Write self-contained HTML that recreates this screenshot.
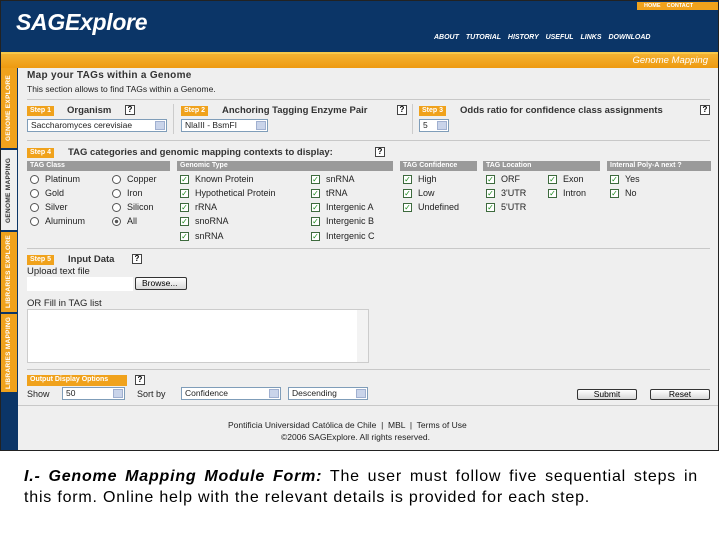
<!DOCTYPE html><html><head><style>
*{margin:0;padding:0;box-sizing:border-box}
body{width:720px;height:540px;background:#fff;font-family:"Liberation Sans",sans-serif;position:relative;overflow:hidden}
.a{position:absolute}
#frame{left:0;top:0;width:719px;height:451px;background:#0b3567;border:1px solid #222}
.t{font-size:9px;color:#222;white-space:nowrap}
.b{font-weight:bold;color:#333;font-size:9.5px;white-space:nowrap}
.step{background:#f0a21c;color:#fff;font-size:7px;font-weight:bold;height:10px;line-height:10px;padding:0 3px}
.hlp{width:10px;height:10px;border:1px solid #444;background:#fff;font-size:8px;font-weight:bold;text-align:center;line-height:8px}
.sel{background:#fff;border:1px solid #7f9db9;height:13px;font-size:8.5px;line-height:11px;padding-left:3px;color:#222}
.sel i{position:absolute;right:1px;top:1px;width:10px;height:9px;background:#c9d4ea;border:1px solid #a0b0d0}
.hdr{background:#9a9a9a;color:#fff;font-size:7px;font-weight:bold;height:10px;line-height:10px;padding-left:3px}
.cb{width:9px;height:9px;border:1px solid #3d6a3d;background:#fff;color:#1a8a1a;font-size:8px;line-height:7px;text-align:center}
.rd{width:9px;height:9px;border:1px solid #555;border-radius:50%;background:#fff}
.hr{height:1px;background:#c8c8c8}
.btn{background:linear-gradient(#fff,#d8d8d8);border:1px solid #333;border-radius:2px;font-size:8.5px;text-align:center;height:11px;line-height:9px}
.tab{left:1px;width:16px;background:#f0a21c;color:#fff;font-size:6.5px;font-weight:bold;writing-mode:vertical-rl;transform:rotate(180deg);text-align:center;letter-spacing:.3px}
</style></head><body>
<div id="frame" class="a"></div>
<div class="a" style="left:16px;top:9px;color:#fff;font-size:23px;font-weight:bold;font-style:italic;letter-spacing:-.3px">SAGExplore</div>
<div class="a" style="left:637px;top:2px;width:81px;height:8px;background:#f0a21c;color:#fff;font-size:5.5px;font-weight:bold;line-height:8px;padding-left:7px">HOME&nbsp;&nbsp;&nbsp;&nbsp;CONTACT</div>
<div class="a" style="left:434px;top:34px;color:#fff;font-size:7px;font-weight:bold;font-style:italic;word-spacing:5px">ABOUT TUTORIAL HISTORY USEFUL&nbsp;LINKS DOWNLOAD</div>
<div class="a" style="left:1px;top:52px;width:717px;height:2px;background:#f7c84a"></div>
<div class="a" style="left:1px;top:54px;width:717px;height:14px;background:linear-gradient(#f4b232,#ee9a10);color:#fff;font-size:9.5px;font-style:italic;text-align:right;padding-right:10px;line-height:14px">Genome Mapping</div>
<div class="a" style="left:18px;top:68px;width:700px;height:382px;background:#efefef"></div>
<div class="a tab" style="top:68px;height:80px;line-height:16px">GENOME EXPLORE</div>
<div class="a tab" style="top:150px;height:80px;line-height:16px;background:#efefef;color:#333">GENOME MAPPING</div>
<div class="a tab" style="top:232px;height:80px;line-height:16px">LIBRARIES EXPLORE</div>
<div class="a tab" style="top:314px;height:78px;line-height:16px">LIBRARIES MAPPING</div>

<div class="a b" style="left:27px;top:70px;font-size:10px;letter-spacing:.3px">Map your TAGs within a Genome</div>
<div class="a t" style="left:27px;top:84px;font-size:8.5px">This section allows to find TAGs within a Genome.</div>
<div class="a hr" style="left:27px;top:99px;width:683px"></div>

<div class="a step" style="left:27px;top:106px">Step 1</div><div class="a b" style="left:67px;top:105px">Organism</div><div class="a hlp" style="left:125px;top:105px">?</div>
<div class="a sel" style="left:27px;top:119px;width:140px">Saccharomyces cerevisiae<i></i></div>
<div class="a" style="left:173px;top:104px;width:1px;height:30px;background:#ccc"></div>
<div class="a step" style="left:181px;top:106px">Step 2</div><div class="a b" style="left:222px;top:105px">Anchoring Tagging Enzyme Pair</div><div class="a hlp" style="left:397px;top:105px">?</div>
<div class="a sel" style="left:181px;top:119px;width:87px">NlaIII - BsmFI<i></i></div>
<div class="a" style="left:412px;top:104px;width:1px;height:30px;background:#ccc"></div>
<div class="a step" style="left:419px;top:106px">Step 3</div><div class="a b" style="left:460px;top:105px">Odds ratio for confidence class assignments</div><div class="a hlp" style="left:700px;top:105px">?</div>
<div class="a sel" style="left:419px;top:119px;width:30px">5<i></i></div>
<div class="a hr" style="left:27px;top:140px;width:683px"></div>

<div class="a step" style="left:27px;top:148px">Step 4</div><div class="a b" style="left:68px;top:147px">TAG categories and genomic mapping contexts to display:</div><div class="a hlp" style="left:375px;top:147px">?</div>
<div class="a hdr" style="left:27px;top:161px;width:143px">TAG Class</div>
<div class="a hdr" style="left:177px;top:161px;width:216px">Genomic Type</div>
<div class="a hdr" style="left:400px;top:161px;width:77px">TAG Confidence</div>
<div class="a hdr" style="left:483px;top:161px;width:117px">TAG Location</div>
<div class="a hdr" style="left:607px;top:161px;width:104px">Internal Poly-A next ?</div>

<div class="a rd" style="left:30px;top:175px"></div><div class="a t" style="left:45px;top:174px">Platinum</div>
<div class="a rd" style="left:30px;top:189px"></div><div class="a t" style="left:45px;top:188px">Gold</div>
<div class="a rd" style="left:30px;top:203px"></div><div class="a t" style="left:45px;top:202px">Silver</div>
<div class="a rd" style="left:30px;top:217px"></div><div class="a t" style="left:45px;top:216px">Aluminum</div>
<div class="a rd" style="left:112px;top:175px"></div><div class="a t" style="left:127px;top:174px">Copper</div>
<div class="a rd" style="left:112px;top:189px"></div><div class="a t" style="left:127px;top:188px">Iron</div>
<div class="a rd" style="left:112px;top:203px"></div><div class="a t" style="left:127px;top:202px">Silicon</div>
<div class="a rd" style="left:112px;top:217px;background:radial-gradient(#555 30%,#fff 40%)"></div><div class="a t" style="left:127px;top:216px">All</div>

<div class="a cb" style="left:180px;top:175px">✓</div><div class="a t" style="left:195px;top:174px">Known Protein</div>
<div class="a cb" style="left:180px;top:189px">✓</div><div class="a t" style="left:195px;top:188px">Hypothetical Protein</div>
<div class="a cb" style="left:180px;top:203px">✓</div><div class="a t" style="left:195px;top:202px">rRNA</div>
<div class="a cb" style="left:180px;top:217px">✓</div><div class="a t" style="left:195px;top:216px">snoRNA</div>
<div class="a cb" style="left:180px;top:232px">✓</div><div class="a t" style="left:195px;top:231px">snRNA</div>
<div class="a cb" style="left:311px;top:175px">✓</div><div class="a t" style="left:326px;top:174px">snRNA</div>
<div class="a cb" style="left:311px;top:189px">✓</div><div class="a t" style="left:326px;top:188px">tRNA</div>
<div class="a cb" style="left:311px;top:203px">✓</div><div class="a t" style="left:326px;top:202px">Intergenic A</div>
<div class="a cb" style="left:311px;top:217px">✓</div><div class="a t" style="left:326px;top:216px">Intergenic B</div>
<div class="a cb" style="left:311px;top:232px">✓</div><div class="a t" style="left:326px;top:231px">Intergenic C</div>
<div class="a cb" style="left:403px;top:175px">✓</div><div class="a t" style="left:418px;top:174px">High</div>
<div class="a cb" style="left:403px;top:189px">✓</div><div class="a t" style="left:418px;top:188px">Low</div>
<div class="a cb" style="left:403px;top:203px">✓</div><div class="a t" style="left:418px;top:202px">Undefined</div>
<div class="a cb" style="left:486px;top:175px">✓</div><div class="a t" style="left:501px;top:174px">ORF</div>
<div class="a cb" style="left:486px;top:189px">✓</div><div class="a t" style="left:501px;top:188px">3'UTR</div>
<div class="a cb" style="left:486px;top:203px">✓</div><div class="a t" style="left:501px;top:202px">5'UTR</div>
<div class="a cb" style="left:548px;top:175px">✓</div><div class="a t" style="left:563px;top:174px">Exon</div>
<div class="a cb" style="left:548px;top:189px">✓</div><div class="a t" style="left:563px;top:188px">Intron</div>
<div class="a cb" style="left:610px;top:175px">✓</div><div class="a t" style="left:625px;top:174px">Yes</div>
<div class="a cb" style="left:610px;top:189px">✓</div><div class="a t" style="left:625px;top:188px">No</div>
<div class="a hr" style="left:27px;top:248px;width:683px"></div>

<div class="a step" style="left:27px;top:255px">Step 5</div><div class="a b" style="left:68px;top:254px">Input Data</div><div class="a hlp" style="left:132px;top:254px">?</div>
<div class="a b" style="left:27px;top:266px;font-weight:normal;color:#222">Upload text file</div>
<div class="a" style="left:27px;top:277px;width:106px;height:14px;background:#fff"></div>
<div class="a btn" style="left:135px;top:277px;width:52px;height:13px;text-align:left;padding-left:6px;line-height:11px">Browse...</div>
<div class="a b" style="left:27px;top:298px;font-weight:normal;color:#222">OR Fill in TAG list</div>
<div class="a" style="left:27px;top:309px;width:342px;height:54px;background:#fff;border:1px solid #ccc"></div>
<div class="a" style="left:357px;top:310px;width:11px;height:52px;background:#f3f3f3"></div>
<div class="a hr" style="left:27px;top:369px;width:683px"></div>

<div class="a step" style="left:27px;top:375px;height:11px;width:100px">Output Display Options</div><div class="a hlp" style="left:135px;top:375px">?</div>
<div class="a t" style="left:27px;top:389px">Show</div>
<div class="a sel" style="left:62px;top:387px;width:63px">50<i></i></div>
<div class="a t" style="left:137px;top:389px">Sort by</div>
<div class="a sel" style="left:181px;top:387px;width:100px">Confidence<i></i></div>
<div class="a sel" style="left:288px;top:387px;width:80px">Descending<i></i></div>
<div class="a btn" style="left:577px;top:389px;width:60px">Submit</div>
<div class="a btn" style="left:650px;top:389px;width:60px">Reset</div>
<div class="a hr" style="left:18px;top:405px;width:700px"></div>
<div class="a t" style="left:228px;top:420px;font-size:8.5px">Pontificia Universidad Católica de Chile &nbsp;|&nbsp; MBL &nbsp;|&nbsp; Terms of Use</div>
<div class="a t" style="left:281px;top:432px;font-size:8.5px">©2006 SAGExplore. All rights reserved.</div>

<div class="a" style="left:24px;top:466px;width:674px;font-size:16px;line-height:21px;color:#000;text-align:justify;letter-spacing:.8px">
<b><i>I.- Genome Mapping Module Form:</i></b> The user must follow five sequential steps in this form. Online help with the relevant details is provided for each step.</div>
</body></html>
